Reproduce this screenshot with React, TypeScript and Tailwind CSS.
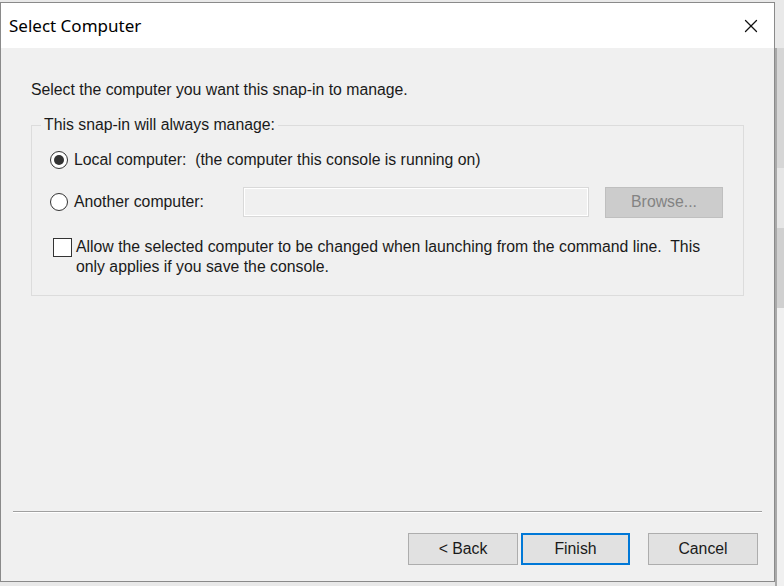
import { X } from 'lucide-react'

const ui = { fontFamily: '"Liberation Sans", Arial, sans-serif' }
const title = { fontFamily: '"Noto Sans", "Open Sans", sans-serif' }

function Radio({ checked }: { checked?: boolean }) {
  return (
    <span className="w-[18px] h-[18px] rounded-full border border-[#333333] bg-white flex items-center justify-center shrink-0">
      {checked && <span className="w-[10px] h-[10px] rounded-full bg-[#333333]" />}
    </span>
  )
}

export default function App() {
  return (
    <div className="w-[784px] h-[586px] overflow-hidden bg-[#e9e9e9] flex" style={ui}>
      <div className="w-[775px] h-[580px] mt-[2px] border border-[#8a8a8a] bg-[#f0f0f0] flex flex-col shrink-0 text-[#1a1a1a]">
        {/* title bar */}
        <div className="h-[45px] bg-white flex items-center justify-between pl-[8px] pr-[12px] shrink-0">
          <span className="text-[17px] text-black pt-[1px]" style={title}>Select Computer</span>
          <X size={22} strokeWidth={1.4} className="text-[#111]" />
        </div>

        {/* body */}
        <div className="flex-1 flex flex-col px-[30px]">
          <p className="mt-[33px] text-[15.8px] leading-[18px]">Select the computer you want this snap-in to manage.</p>

          <fieldset className="mt-[17px] h-[180px] border border-[#dcdcdc] px-[18px] text-[15.8px]">
            <legend className="-ml-[9px] px-[3px] leading-[18px]">This snap-in will always manage:</legend>

            <div className="mt-[16px] flex items-center gap-[6px] h-[20px]">
              <Radio checked />
              <span>Local computer:&nbsp; (the computer this console is running on)</span>
            </div>

            <div className="mt-[22px] flex items-center h-[20px]">
              <div className="flex items-center gap-[6px] w-[193px]">
                <Radio />
                <span>Another computer:</span>
              </div>
              <div className="w-[346px] h-[30px] border border-[#d9d9d9] bg-[#f0f0f0] shadow-[inset_0_0_0_1px_#ffffff]" />
              <div className="ml-[16px] w-[118px] h-[31px] border border-[#bfbfbf] bg-[#cccccc] flex items-center justify-center text-[#838383]">
                Browse...
              </div>
            </div>

            <div className="mt-[25px] flex items-start gap-[4px] pl-[3px]">
              <span className="w-[19px] h-[19px] border border-[#333333] bg-white shrink-0 mt-[1px]" />
              <span className="leading-[20px]">
                Allow the selected computer to be changed when launching from the command line.&nbsp; This
                <br />
                only applies if you save the console.
              </span>
            </div>
          </fieldset>

          <div className="flex-1" />
        </div>

        {/* footer */}
        <div className="px-[12px] shrink-0">
          <div className="h-[2px] border-t border-[#a0a0a0] border-b border-b-white" />
        </div>
        <div className="h-[68px] flex items-start justify-end pr-[16px] pt-[20px] shrink-0 text-[15.8px]">
          <div className="w-[110px] h-[32px] border border-[#adadad] bg-[#e1e1e1] flex items-center justify-center">&lt; Back</div>
          <div className="ml-[3px] w-[109px] h-[32px] border-2 border-[#0078d7] bg-[#e1e1e1] flex items-center justify-center">Finish</div>
          <div className="ml-[18px] w-[110px] h-[32px] border border-[#adadad] bg-[#e1e1e1] flex items-center justify-center">Cancel</div>
        </div>
      </div>

      {/* backdrop strip */}
      <div className="flex-1 flex flex-col">
        <div className="h-[48px]" />
        <div className="h-[120px] border-l-2 border-[#a9a9a9] bg-[#d6d6d6]" />
        <div className="h-[60px] border-l-2 border-[#a9a9a9] bg-[#e6e6e6]" />
        <div className="h-[80px] border-l-2 border-[#a9a9a9] bg-[#d0d0d0]" />
        <div className="flex-1 border-l-2 border-[#a9a9a9] bg-[#f0f0f0]" />
      </div>
    </div>
  )
}
